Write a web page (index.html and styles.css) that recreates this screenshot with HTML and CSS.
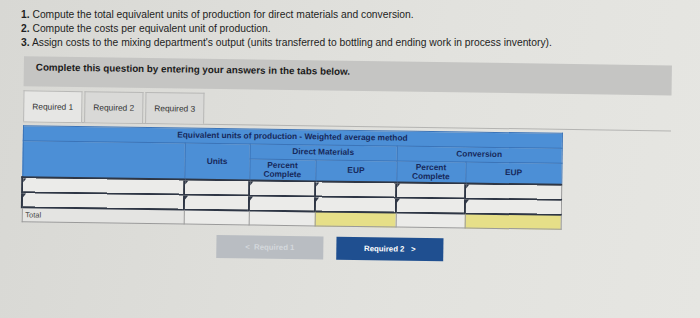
FILE: index.html
```html
<!DOCTYPE html>
<html lang="en">
<head>
  <meta charset="UTF-8" />
  <title>Equivalent units</title>
  <link rel="stylesheet" href="styles.css">
</head>
<body>
  <ol class="steps">
    <li><b>1.</b> Compute the total equivalent units of production for direct materials and conversion.</li>
    <li><b>2.</b> Compute the costs per equivalent unit of production.</li>
    <li><b>3.</b> Assign costs to the mixing department's output (units transferred to bottling and ending work in process inventory).</li>
  </ol>

  <div class="sheet">
    <div class="banner">Complete this question by entering your answers in the tabs below.</div>

    <div class="tabs">
      <div class="tab active">Required 1</div>
      <div class="tab">Required 2</div>
      <div class="tab">Required 3</div>
    </div>

    <table class="eup">
      <colgroup>
        <col style="width:162px"><col style="width:65px"><col style="width:66px">
        <col style="width:81px"><col style="width:69px"><col style="width:96px">
      </colgroup>
      <tr class="h1"><th colspan="6">Equivalent units of production - Weighted average method</th></tr>
      <tr class="h2">
        <th rowspan="2"></th>
        <th rowspan="2" class="units">Units</th>
        <th colspan="2">Direct Materials</th>
        <th colspan="2">Conversion</th>
      </tr>
      <tr class="h3">
        <th>Percent<br>Complete</th>
        <th>EUP</th>
        <th>Percent<br>Complete</th>
        <th>EUP</th>
      </tr>
      <tr class="row">
        <td class="input"></td><td class="input"></td><td class="input"></td>
        <td class="input"></td><td class="input"></td><td class="input"></td>
      </tr>
      <tr class="row">
        <td class="input"></td><td class="input"></td><td class="input"></td>
        <td class="input"></td><td class="input"></td><td class="input"></td>
      </tr>
      <tr class="row total">
        <td class="label">Total</td><td></td><td></td>
        <td class="calc"></td><td></td><td class="calc"></td>
      </tr>
    </table>

    <div class="nav">
      <button class="btn prev" disabled>&lt;&nbsp;&nbsp;Required 1</button>
      <button class="btn next">Required 2&nbsp;&nbsp;&nbsp;&gt;</button>
    </div>
  </div>
</body>
</html>
```

FILE: styles.css
```css
body {
  margin: 0;
  background: linear-gradient(100deg, #d8d8d4, #e2e2de 60%, #e6e6e2);
  font-family: "Liberation Sans", Arial, sans-serif;
  color: #222;
  height: 318px;
  overflow: hidden;
}

.steps {
  list-style: none;
  margin: 0;
  padding: 8px 0 0 21px;
  font-size: 10.3px;
  line-height: 14px;
  color: #1e1e22;
}

.steps b {
  font-weight: bold;
}

.sheet {
  transform: rotate(0.8deg);
  transform-origin: 0 0;
}

.banner {
  margin: 6px 28px 0 24px;
  height: 30px;
  padding: 5px 12px 0;
  box-sizing: border-box;
  background: #c5c5c3;
  font-size: 9.8px;
  font-weight: bold;
  color: #1c1c1c;
}

.tabs {
  display: flex;
  gap: 2px;
  margin: 4px 28px 0 24px;
  border-bottom: 1px solid #b4b4b2;
}

.tab {
  width: 59px;
  height: 31px;
  box-sizing: border-box;
  padding-top: 10px;
  text-align: center;
  font-size: 8.4px;
  color: #333;
  background: #d9d9d7;
  border: 1px solid #b8b8b6;
  border-bottom: none;
}

.tab.active {
  background: #e6e6e4;
}

.eup {
  margin: 3px 0 0 23px;
  width: 539px;
  border-collapse: collapse;
  table-layout: fixed;
}

.eup th {
  background: #4c8fd6;
  color: #16285a;
  font-size: 8.3px;
  font-weight: bold;
  padding: 0;
  border: 1px solid #3b74b8;
  line-height: 9.5px;
}

.h1 th { height: 14px; }
.h2 th { height: 14px; }
.h3 th { height: 20px; }
.units { vertical-align: middle; }

.row td {
  height: 13px;
  padding: 0;
  background: #ebebe9;
  border: 1px solid #9a9a9a;
}

.row td.input {
  position: relative;
  border-top: 2px solid #2e3645;
  border-left: 2px solid #2e3645;
}

.row td.input::before {
  content: "";
  position: absolute;
  top: 0;
  left: 0;
  border-top: 4px solid #2e3645;
  border-right: 3px solid transparent;
}

.total td {
  border-top: 2px solid #2e3645;
}

.total .label {
  font-size: 7.5px;
  color: #444;
  padding-left: 3px;
  background: #e4e4e2;
}

.total .calc {
  background: #e6df88;
}

.nav {
  display: flex;
  gap: 13px;
  margin: 10px 0 0 219px;
}

.btn {
  width: 107px;
  height: 23px;
  border: none;
  font-family: "Liberation Sans", Arial, sans-serif;
  font-size: 7.8px;
  font-weight: bold;
}

.prev {
  background: #b9bdc2;
  color: #d4d8dc;
}

.next {
  background: #1f4f90;
  color: #fff;
}
```
